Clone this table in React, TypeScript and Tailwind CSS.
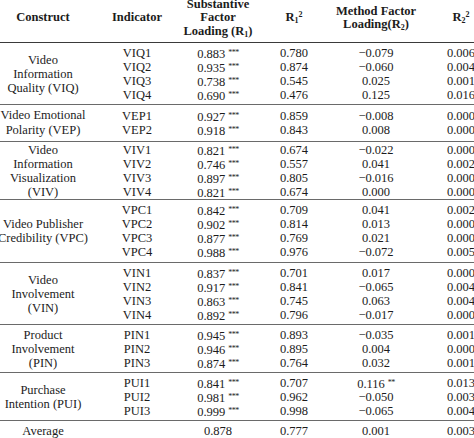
// App.tsx
//
// Table of common method bias results: substantive and method factor loadings.

type Row = [string, string, string, string, string];

interface Section {
  lines : string[];
  height: string;
  lead  : string;
  rows  : Row[];
}

// biome-ignore format: added alignment for clarity.
const sections: Section[] = [
  {
    lines : ["Video", "Information", "Quality (VIQ)"],
    height: "h-[62px]",
    lead  : "leading-[14px]",
    rows  : [
      ["VIQ1", "0.883 ***", "0.780", "−0.079", "0.006"],
      ["VIQ2", "0.935 ***", "0.874", "−0.060", "0.004"],
      ["VIQ3", "0.738 ***", "0.545", "0.025", "0.001"],
      ["VIQ4", "0.690 ***", "0.476", "0.125", "0.016"],
    ],
  },
  {
    lines : ["Video Emotional", "Polarity (VEP)"],
    height: "h-[37px]",
    lead  : "leading-[15px]",
    rows  : [
      ["VEP1", "0.927 ***", "0.859", "−0.008", "0.000"],
      ["VEP2", "0.918 ***", "0.843", "0.008", "0.000"],
    ],
  },
  {
    lines : ["Video", "Information", "Visualization", "(VIV)"],
    height: "h-[58px]",
    lead  : "leading-[14px]",
    rows  : [
      ["VIV1", "0.821 ***", "0.674", "−0.022", "0.000"],
      ["VIV2", "0.746 ***", "0.557", "0.041", "0.002"],
      ["VIV3", "0.897 ***", "0.805", "−0.016", "0.000"],
      ["VIV4", "0.821 ***", "0.674", "0.000", "0.000"],
    ],
  },
  {
    lines : ["Video Publisher", "Credibility (VPC)"],
    height: "h-[63px]",
    lead  : "leading-[14px]",
    rows  : [
      ["VPC1", "0.842 ***", "0.709", "0.041", "0.002"],
      ["VPC2", "0.902 ***", "0.814", "0.013", "0.000"],
      ["VPC3", "0.877 ***", "0.769", "0.021", "0.000"],
      ["VPC4", "0.988 ***", "0.976", "−0.072", "0.005"],
    ],
  },
  {
    lines : ["Video", "Involvement", "(VIN)"],
    height: "h-[62px]",
    lead  : "leading-[14px]",
    rows  : [
      ["VIN1", "0.837 ***", "0.701", "0.017", "0.000"],
      ["VIN2", "0.917 ***", "0.841", "−0.065", "0.004"],
      ["VIN3", "0.863 ***", "0.745", "0.063", "0.004"],
      ["VIN4", "0.892 ***", "0.796", "−0.017", "0.000"],
    ],
  },
  {
    lines : ["Product", "Involvement", "(PIN)"],
    height: "h-[48px]",
    lead  : "leading-[14px]",
    rows  : [
      ["PIN1", "0.945 ***", "0.893", "−0.035", "0.001"],
      ["PIN2", "0.946 ***", "0.895", "0.004", "0.000"],
      ["PIN3", "0.874 ***", "0.764", "0.032", "0.001"],
    ],
  },
  {
    lines : ["Purchase", "Intention (PUI)"],
    height: "h-[48px]",
    lead  : "leading-[14px]",
    rows  : [
      ["PUI1", "0.841 ***", "0.707", "0.116 **", "0.013"],
      ["PUI2", "0.981 ***", "0.962", "−0.050", "0.003"],
      ["PUI3", "0.999 ***", "0.998", "−0.065", "0.004"],
    ],
  },
];

// Column widths, left to right.
const cols = ["w-[86px]", "w-[102px]", "w-[60px]", "w-[92px]", "w-[72px]", "w-[98px]"];

function Value({ text }: { text: string }): JSX.Element {
  const [num, stars] = text.split(" ");
  return (
    <span className="whitespace-nowrap">
      {num}
      {stars && (
        <span className="ml-[3px] text-[8px] align-[3px] tracking-[-0.5px]">{stars}</span>
      )}
    </span>
  );
}

function Cell({ width, children }: { width: string; children: React.ReactNode }): JSX.Element {
  return (
    <div className={`${width} shrink-0 flex flex-col items-center justify-center whitespace-nowrap`}>
      {children}
    </div>
  );
}

export default function App(): JSX.Element {
  return (
    <div
      className="w-[474px] h-[438px] overflow-hidden bg-white text-[#1c1c1c] text-[12.5px]"
      style={{ fontFamily: '"Liberation Serif", "Times New Roman", serif' }}
    >
      <div className="w-[510px]">
        {/* header */}
        <div className="flex h-[43px] pb-[6px] border-b border-[#3a3a3a] font-bold leading-[13.5px] box-border">
          <Cell width={cols[0]}>Construct</Cell>
          <Cell width={cols[1]}>Indicator</Cell>
          <Cell width={cols[2]}>
            <span>Substantive</span>
            <span>Factor</span>
            <span>
              Loading (R<sub className="text-[8px]">1</sub>)
            </span>
          </Cell>
          <Cell width={cols[3]}>
            <span>
              R<sub className="text-[8px]">1</sub>
              <sup className="text-[8px]">2</sup>
            </span>
          </Cell>
          <Cell width={cols[4]}>
            <span>Method Factor</span>
            <span>
              Loading(R<sub className="text-[8px]">2</sub>)
            </span>
          </Cell>
          <Cell width={cols[5]}>
            <span>
              R<sub className="text-[8px]">2</sub>
              <sup className="text-[8px]">2</sup>
            </span>
          </Cell>
        </div>

        {/* body sections */}
        {sections.map((s) => (
          <div key={s.lines.join(" ")} className={`flex ${s.height} border-b border-[#6a6a6a] box-border`}>
            <Cell width={cols[0]}>
              <div className={`flex flex-col items-center ${s.lead}`}>
                {s.lines.map((l) => (
                  <span key={l}>{l}</span>
                ))}
              </div>
            </Cell>
            {[0, 1, 2, 3, 4].map((c) => (
              <Cell key={c} width={cols[c + 1]}>
                {s.rows.map((r) => (
                  <div key={r[0]} className="h-[14px] leading-[14px]">
                    {c === 1 || c === 3 ? <Value text={r[c]} /> : r[c]}
                  </div>
                ))}
              </Cell>
            ))}
          </div>
        ))}

        {/* average */}
        <div className="flex h-[20px] leading-[14px]">
          <Cell width={cols[0]}>Average</Cell>
          <Cell width={cols[1]}>{""}</Cell>
          <Cell width={cols[2]}>0.878</Cell>
          <Cell width={cols[3]}>0.777</Cell>
          <Cell width={cols[4]}>0.001</Cell>
          <Cell width={cols[5]}>0.003</Cell>
        </div>
      </div>
    </div>
  );
}
